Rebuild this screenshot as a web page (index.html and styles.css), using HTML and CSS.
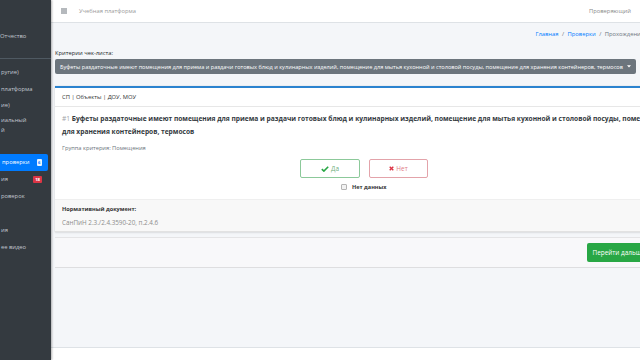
FILE: index.html
```html
<!DOCTYPE html>
<html lang="ru">
<head>
<meta charset="utf-8">
<title>Учебная платформа</title>
<link rel="stylesheet" href="styles.css">
</head>
<body>
<div class="app">
  <aside class="sidebar">
    <div class="user">Отчество</div>
    <nav class="nav">
      <div class="item">ругие)</div>
      <div class="item">платформа</div>
      <div class="item">ие)</div>
      <div class="item two">иальный<br>й</div>
      <div class="item"></div>
      <div class="item active"><span>проверки</span><span class="badge badge-light">6</span></div>
      <div class="item"><span>ия</span><span class="badge badge-red">18</span></div>
      <div class="item">роверок</div>
      <div class="item"></div>
      <div class="item">ия</div>
      <div class="item">ее видео</div>
    </nav>
  </aside>
  <div class="main">
    <header class="topbar">
      <svg class="burger" width="6" height="6" viewBox="0 0 6 6"><rect x="0" y="0.5" width="6" height="1" fill="#6c757d"/><rect x="0" y="2.5" width="6" height="1" fill="#6c757d"/><rect x="0" y="4.5" width="6" height="1" fill="#6c757d"/></svg>
      <span class="brand">Учебная платформа</span>
      <span class="role">Проверяющий</span>
    </header>
    <div class="content">
      <div class="crumbs">
        <a class="crumb-link">Главная</a><span class="sep">/</span><a class="crumb-link">Проверки</a><span class="sep">/</span><span class="crumb-cur">Прохождение проверки</span>
      </div>
      <div class="field">
        <div class="field-label">Критерии чек-листа:</div>
        <div class="select"><span>Буфеты раздаточные имеют помещения для приема и раздачи готовых блюд и кулинарных изделий, помещение для мытья кухонной и столовой посуды, помещение для хранения контейнеров, термосов</span><svg class="caret" width="4" height="3" viewBox="0 0 4 3"><path d="M0 0.3 L4 0.3 L2 2.6 Z" fill="#fff"/></svg></div>
      </div>
      <section class="card">
        <div class="card-head">СП | Объекты | ДОУ, МОУ</div>
        <div class="card-body">
          <div class="question"><span class="num">#1</span>&nbsp;Буфеты раздаточные имеют помещения для приема и раздачи готовых блюд и кулинарных изделий, помещение для мытья кухонной и столовой посуды, помещение для хранения контейнеров, термосов</div>
          <div class="group">Группа критерия: Помещения</div>
          <div class="answers">
            <button class="btn btn-yes"><svg width="8" height="6" viewBox="0 0 8 6"><path d="M0.8 3.1 L2.9 5.1 L7.2 0.8" fill="none" stroke="#28a745" stroke-width="1.6"/></svg><span>Да</span></button>
            <button class="btn btn-no"><svg width="5" height="5" viewBox="0 0 5 5"><path d="M0.7 0.7 L4.3 4.3 M4.3 0.7 L0.7 4.3" fill="none" stroke="#dc3545" stroke-width="1.4"/></svg><span>Нет</span></button>
          </div>
          <label class="nodata"><span class="checkbox"></span><span>Нет данных</span></label>
        </div>
        <div class="card-foot">
          <div class="doc-title">Нормативный документ:</div>
          <div class="doc">СанПиН 2.3./2.4.3590-20, п.2.4.6</div>
        </div>
      </section>
      <div class="next-bar">
        <button class="btn-next">Перейти дальше</button>
      </div>
    </div>
    <footer class="footer"></footer>
  </div>
</div>
</body>
</html>
```

FILE: styles.css
```css
* { box-sizing: border-box; }
html, body { margin: 0; padding: 0; }
body {
  width: 640px;
  height: 360px;
  overflow: hidden;
  font-family: "Open Sans", "Noto Sans", sans-serif;
  font-size: 5.8px;
  color: #212529;
  background: #f4f6f9;
}
.app { display: flex; width: 677px; height: 360px; }

/* sidebar */
.sidebar {
  width: 51px;
  flex: none;
  background: #343a40;
  color: #c2c7d0;
  white-space: nowrap;
  overflow: hidden;
  box-shadow: 1px 0 2px rgba(0,0,0,.3);
  position: relative;
  z-index: 2;
}
.user {
  height: 59px;
  border-bottom: 1px solid #4f5962;
  padding-top: 33px;
  line-height: 7px;
}
.nav { padding-top: 4.75px; }
.item {
  height: 16.5px;
  display: flex;
  align-items: center;
  padding-left: 1px;
  margin-right: 3px;
}
.item.two { display: block; height: 24px; line-height: 10.5px; padding-top: 1.5px; }
.item.active, .item.active ~ .item { height: 17px; }
.item.active {
  background: #007bff;
  color: #fff;
  border-radius: 0 2px 2px 0;
  padding-left: 2px;
}
.badge {
  margin-left: auto;
  margin-right: 6px;
  font-size: 4.2px;
  font-weight: 700;
  line-height: 7px;
  padding: 0 1.5px;
  border-radius: 1px;
}
.badge-light { background: #eaf4ff; color: #007bff; }
.badge-red { background: #dc3545; color: #fff; padding: 0 2px; }

/* main */
.main { width: 626px; flex: none; display: flex; flex-direction: column; }
.topbar {
  height: 23px;
  flex: none;
  background: #fff;
  border-bottom: 1px solid #dee2e6;
  display: flex;
  align-items: center;
  padding-left: 10px;
  font-size: 5.8px;
}
.burger { display: block; }
.brand { margin-left: 12px; color: #9a9a9a; }
.role { margin-left: auto; margin-right: 46px; color: #8a8a8a; }

.content { flex: 1; padding: 6px 4px 0; }
.crumbs {
  display: flex;
  justify-content: flex-end;
  line-height: 10px;
  height: 10px;
}
.crumb-link { color: #007bff; }
.sep { color: #6c757d; margin: 0 3.5px; }
.crumb-cur { color: #6c757d; }

.field { margin-top: 10px; }
.field-label { line-height: 9px; color: #212529; }
.select {
  margin-top: 1px;
  display: inline-flex;
  align-items: center;
  gap: 4px;
  height: 15px;
  padding: 0 5px;
  background: #6c757d;
  color: #fff;
  border-radius: 2px;
  white-space: nowrap;
  font-size: 5.6px;
}
.caret { display: block; }

.card {
  margin-top: 12px;
  background: #fff;
  border-top: 2px solid #2b83cf;
  box-shadow: 0 0 1px rgba(0,0,0,.18), 0 1px 2px rgba(0,0,0,.08);
}
.card-head {
  height: 19px;
  line-height: 18px;
  padding: 0 7px;
  border-bottom: 1px solid #e7e7e7;
  color: #333;
}
.card-body { padding: 5px 7px 8px; }
.question {
  font-size: 6.65px;
  font-weight: 700;
  line-height: 13px;
  color: #343a40;
}
.question .num { color: #a0a4a8; font-weight: 400; }
.group { margin-top: 6px; line-height: 9px; color: #6c757d; font-size: 5.7px; }
.answers { margin-top: 6px; display: flex; justify-content: center; gap: 9px; }
.btn {
  width: 60px;
  height: 19px;
  display: flex;
  align-items: center;
  justify-content: center;
  gap: 2px;
  background: #fff;
  border: 1px solid;
  border-radius: 2px;
  font-family: inherit;
  font-size: 6.4px;
  padding: 0;
}
.btn svg { display: block; }
.btn-yes { border-color: #8cc99a; color: #6fae80; }
.btn-no { border-color: #e3a3aa; color: #e27c87; width: 59px; }
.nodata {
  margin-top: 5px;
  display: flex;
  justify-content: center;
  align-items: center;
  gap: 4.5px;
  line-height: 8px;
  font-weight: 700;
  font-size: 5.6px;
  color: #333;
}
.checkbox {
  width: 6px;
  height: 6px;
  border: 1px solid #b5b5b5;
  border-radius: 1px;
  background: #f2f2f2;
}
.card-foot {
  background: #f8f8f8;
  border-top: 1px solid #efefef;
  border-bottom: 1px solid #e2e2e2;
  padding: 5px 7px 4px;
}
.doc-title { font-weight: 700; line-height: 9px; color: #333; font-size: 5.6px; }
.doc { margin-top: 3.5px; line-height: 9px; color: #8c8c8c; font-size: 6.3px; }

.next-bar {
  margin-top: 5px;
  background: #f8f8fa;
  border-top: 1px solid #e4e4e6;
  border-bottom: 1px solid #dedee0;
  padding: 5px 22px 5px;
  display: flex;
  justify-content: flex-end;
}
.btn-next {
  height: 19px;
  padding: 0 6px;
  background: #28a745;
  color: #fff;
  border: 0;
  border-radius: 2px;
  font-family: inherit;
  font-size: 6.4px;
  white-space: nowrap;
}
.footer {
  height: 13px;
  flex: none;
  background: #fff;
  border-top: 1px solid #dee2e6;
}
```
